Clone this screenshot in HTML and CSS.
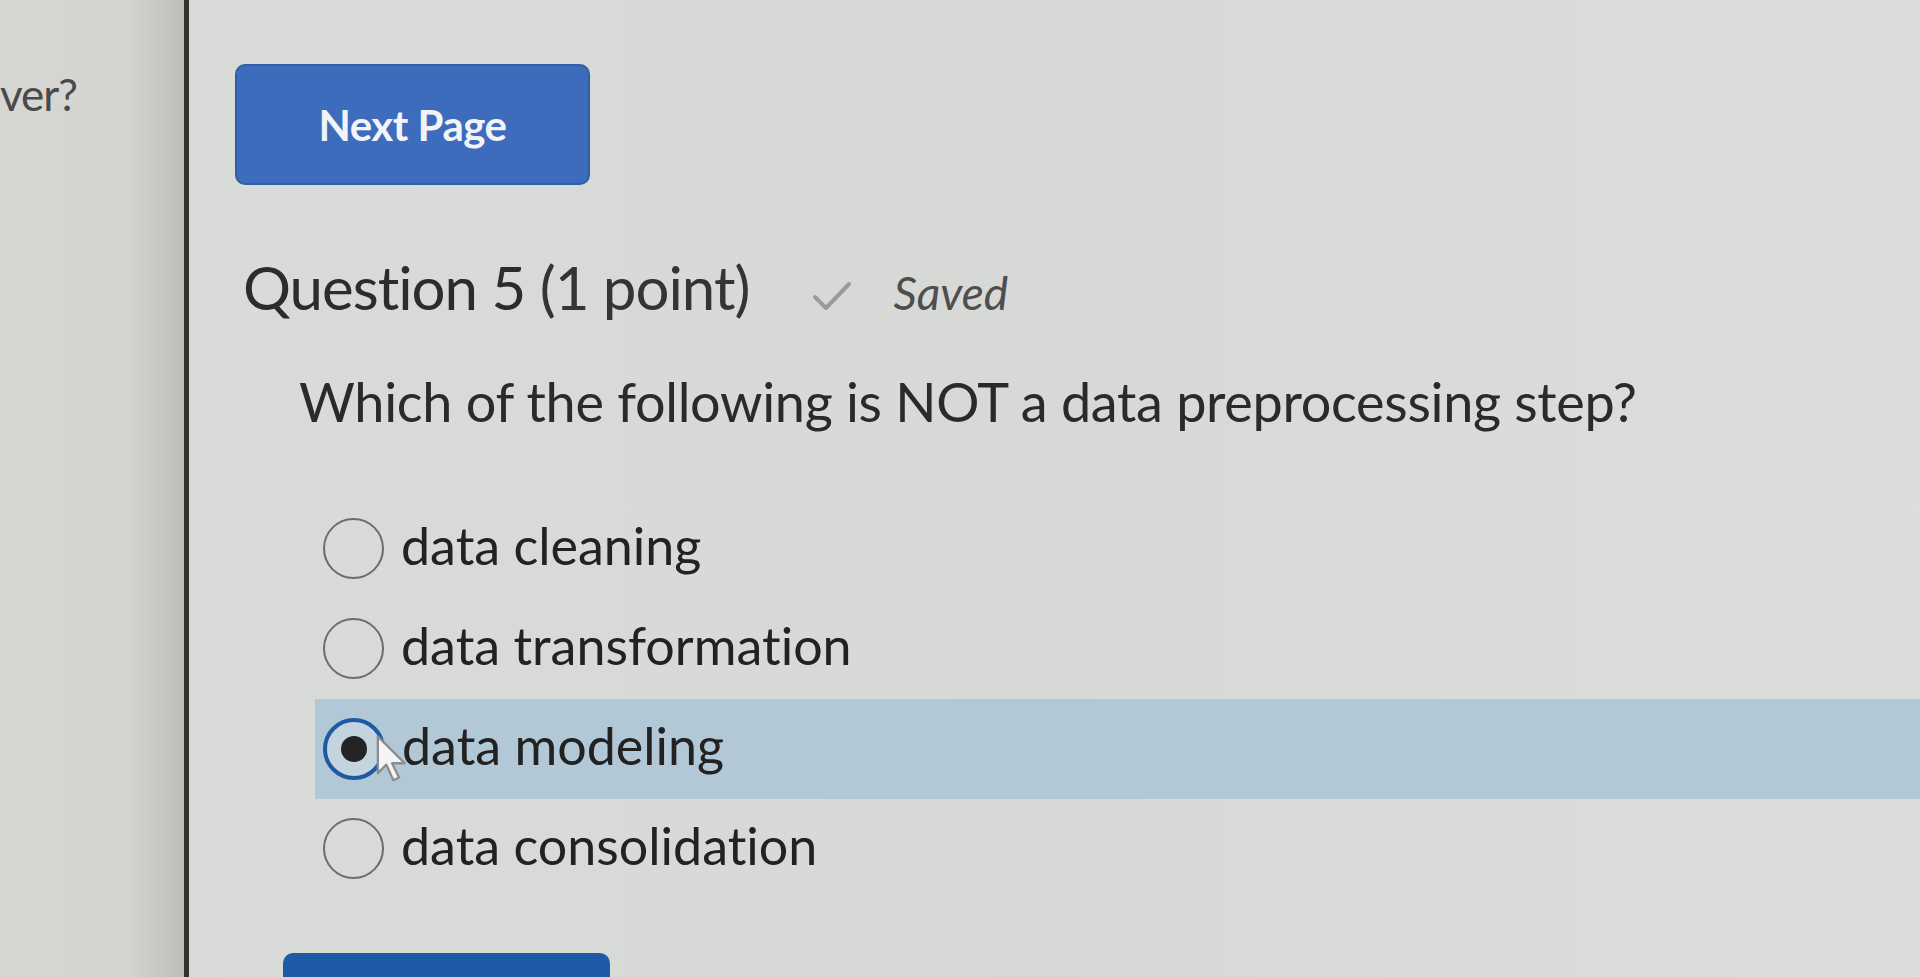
FILE: index.html
```html
<!DOCTYPE html>
<html lang="en">
<head>
<meta charset="utf-8">
<title>Quiz - Question 5</title>
<link rel="stylesheet" href="styles.css">
</head>
<body>
<div class="page">
  <aside class="side">
    <p class="side-text">ver?</p>
  </aside>
  <main class="main">
    <button class="nav-btn" type="button">Next Page</button>
    <div class="q-head">
      <h2 class="q-title">Question 5 <span class="q-points">(1 point)</span></h2>
      <span class="q-saved">
        <svg class="check" viewBox="0 0 42 32" width="42" height="32" aria-hidden="true"><path d="M4 17 L15 28 L38 4" fill="none" stroke="#9a9c9c" stroke-width="4" stroke-linecap="round" stroke-linejoin="round"/></svg>
        <span class="saved-label">Saved</span>
      </span>
    </div>
    <p class="q-text">Which of the following is NOT a data preprocessing step?</p>
    <ul class="options">
      <li class="opt"><span class="radio"></span><span class="opt-label">data cleaning</span></li>
      <li class="opt"><span class="radio"></span><span class="opt-label">data transformation</span></li>
      <li class="opt opt-selected"><span class="radio radio-on"><span class="dot"></span></span><span class="opt-label">data modeling</span>
        <svg class="cursor" viewBox="0 0 24 36" width="34" height="52" aria-hidden="true"><path d="M2 2 L2 28 L8 22 L13 33 L17 31 L12 21 L21 21 Z" fill="#f4f4f4" stroke="#8a8c8c" stroke-width="1.6" stroke-linejoin="round"/></svg>
      </li>
      <li class="opt"><span class="radio"></span><span class="opt-label">data consolidation</span></li>
    </ul>
    <div class="bottom-btn"></div>
  </main>
</div>
</body>
</html>
```
FILE: styles.css
```css
html, body {
  margin: 0;
  padding: 0;
}
body {
  width: 1920px;
  height: 977px;
  overflow: hidden;
  font-family: Lato, "Noto Sans", sans-serif;
  font-variant-ligatures: none;
  background: #d8dad7;
}
.page {
  display: flex;
  height: 977px;
}
.side {
  width: 184px;
  flex: 0 0 184px;
  background: linear-gradient(to right, #d6d6d3 0%, #d4d4d1 68%, #c6c7c4 88%, #bdbdba 100%);
  border-right: 5px solid #34302e;
  overflow: hidden;
}
.side-text {
  margin: 68px 0 0 0;
  padding-left: 0;
  white-space: nowrap;
  font-size: 44px;
  color: #4a4a4a;
  letter-spacing: -1px;
}
.main {
  flex: 1;
  padding-left: 46px;
  background: linear-gradient(to right, #d9dbd8 0%, #d7d9d6 50%, #dcdedb 100%);
  display: flex;
  flex-direction: column;
  align-items: flex-start;
  overflow: hidden;
}
.main > * {
  flex-shrink: 0;
}
.nav-btn {
  margin-top: 64px;
  width: 355px;
  height: 121px;
  border: 2px solid #305fa6;
  border-radius: 10px;
  background: #3d6cbd;
  color: #f2f4f8;
  font-family: Lato, sans-serif;
  font-weight: 700;
  font-size: 42px;
  padding: 0;
  letter-spacing: -0.5px;
}
.q-head {
  margin-top: 66px;
  margin-left: 8px;
  display: flex;
  align-items: baseline;
}
.q-title {
  margin: 0;
  font-size: 60px;
  font-weight: 400;
  color: #2e2c2b;
  line-height: 1.2;
  letter-spacing: -1px;
}
.q-points {
  color: #353434;
}
.q-saved {
  margin-left: 62px;
  display: flex;
  align-items: baseline;
  gap: 40px;
  color: #4e4e4e;
  font-size: 46px;
}
.saved-label {
  font-style: italic;
  font-weight: 400;
}
.check {
  position: relative;
  top: 2px;
}
.q-text {
  margin: 47px 0 0 64px;
  font-size: 54px;
  color: #2a2a2a;
  line-height: 1.2;
  letter-spacing: -0.3px;
}
.options {
  list-style: none;
  margin: 64px 0 0 80px;
  padding: 0;
  align-self: stretch;
}
.opt {
  position: relative;
  height: 100px;
  display: flex;
  align-items: center;
  gap: 17px;
  padding-left: 8px;
  font-size: 52px;
  color: #222;
}
.opt-label {
  position: relative;
  top: -4px;
}
.opt-selected {
  background: #b2c8d6;
}
.radio {
  width: 57px;
  height: 57px;
  border: 2px solid #6c6c6c;
  border-radius: 50%;
  flex: 0 0 auto;
  display: flex;
  align-items: center;
  justify-content: center;
}
.radio-on {
  width: 54px;
  height: 54px;
  border: 4px solid #1c5aa3;
  background: #c4d4de;
}
.dot {
  width: 26px;
  height: 26px;
  border-radius: 50%;
  background: #222426;
}
.cursor {
  position: absolute;
  left: 60px;
  top: 34px;
}
.bottom-btn {
  margin-top: 54px;
  margin-left: 48px;
  width: 327px;
  height: 40px;
  background: #1e5aa8;
  border-radius: 10px 10px 0 0;
}
```
